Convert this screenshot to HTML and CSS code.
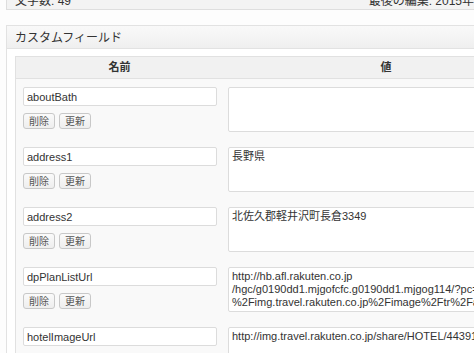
FILE: index.html
```html
<!DOCTYPE html>
<html lang="ja">
<head>
  <meta charset="UTF-8">
  <title>カスタムフィールド</title>
  <link rel="stylesheet" href="styles.css">
</head>
<body>
  <div class="status-bar">
    <span class="word-count">文字数: 49</span>
    <span class="last-edit">最後の編集: 2015年</span>
  </div>

  <div class="postbox">
    <h3 class="postbox-title">カスタムフィールド</h3>
    <div class="inside">
      <div class="meta-table">
        <div class="meta-head">名前</div>
        <div class="meta-head">値</div>

        <!-- rows -->
        <div class="meta-key">
          <input class="key-input" type="text" value="aboutBath">
          <div class="meta-buttons">
            <button class="small-button">削除</button>
            <button class="small-button">更新</button>
          </div>
        </div>
        <div class="meta-value"><textarea class="value-input" wrap="off"></textarea></div>

        <div class="meta-key">
          <input class="key-input" type="text" value="address1">
          <div class="meta-buttons">
            <button class="small-button">削除</button>
            <button class="small-button">更新</button>
          </div>
        </div>
        <div class="meta-value"><textarea class="value-input" wrap="off">長野県</textarea></div>

        <div class="meta-key">
          <input class="key-input" type="text" value="address2">
          <div class="meta-buttons">
            <button class="small-button">削除</button>
            <button class="small-button">更新</button>
          </div>
        </div>
        <div class="meta-value"><textarea class="value-input" wrap="off">北佐久郡軽井沢町長倉3349</textarea></div>

        <div class="meta-key">
          <input class="key-input" type="text" value="dpPlanListUrl">
          <div class="meta-buttons">
            <button class="small-button">削除</button>
            <button class="small-button">更新</button>
          </div>
        </div>
        <div class="meta-value"><textarea class="value-input" wrap="off">http://hb.afl.rakuten.co.jp
/hgc/g0190dd1.mjgofcfc.g0190dd1.mjgog114/?pc=http%3A%2F%2Fimg.travel.rakuten.co.jp
%2Fimg.travel.rakuten.co.jp%2Fimage%2Ftr%2Fapi%2Fkw%2F</textarea></div>

        <div class="meta-key">
          <input class="key-input" type="text" value="hotelImageUrl">
          <div class="meta-buttons">
            <button class="small-button">削除</button>
            <button class="small-button">更新</button>
          </div>
        </div>
        <div class="meta-value"><textarea class="value-input" wrap="off">http://img.travel.rakuten.co.jp/share/HOTEL/44391/44391.jpg</textarea></div>
      </div>
    </div>
  </div>
</body>
</html>
```

FILE: styles.css
```css
html, body {
  overflow: hidden;
}

body {
  margin: 0;
  background-color: #fdfdfd;
  font-family: "Liberation Sans", "Noto Sans CJK JP", sans-serif;
  color: #333;
}

/* word count bar, mostly scrolled off the top */
.status-bar {
  display: flex;
  justify-content: space-between;
  align-items: flex-end;
  height: 9px;
  margin-left: 6px;
  padding-left: 8px;
  overflow: hidden;
  background-color: #f3f3f3;
  border-left: 1px solid #dedede;
  border-bottom: 1px solid #dedede;
  font-size: 12px;
  line-height: 15px;
  white-space: nowrap;
}

.postbox {
  width: 560px;
  margin-top: 15px;
  margin-left: 6px;
  background-color: #fff;
  border: 1px solid #e2e2e2;
}

.postbox-title {
  margin: 0;
  height: 22px;
  padding-left: 8px;
  font-size: 12px;
  font-weight: normal;
  line-height: 22px;
  color: #333;
  font-family: "Noto Sans CJK JP", sans-serif;
  background: linear-gradient(#f9f9f9, #efefef);
  border-bottom: 1px solid #e2e2e2;
}

.inside {
  padding: 7px 0 0 8px;
}

.meta-table {
  display: grid;
  grid-template-columns: 207px 326px;
  background-color: #f9f9f9;
  border: 1px solid #e1e1e1;
}

.meta-head {
  height: 21px;
  line-height: 21px;
  text-align: center;
  font-size: 11px;
  font-weight: bold;
  color: #333;
  background-color: #f1f1f1;
  border-bottom: 1px solid #e1e1e1;
}

.meta-key {
  padding: 8px 6px 7px 7px;
}

.meta-value {
  padding: 8px 0 7px 5px;
}

.key-input {
  display: block;
  box-sizing: border-box;
  width: 194px;
  height: 19px;
  margin: 0;
  padding: 0 3px;
  font-family: "Liberation Sans", "Noto Sans CJK JP", sans-serif;
  font-size: 11px;
  color: #333;
  background-color: #fff;
  border: 1px solid #dcdcdc;
  border-radius: 2px;
}

.meta-buttons {
  display: flex;
  gap: 4px;
  margin-top: 7px;
}

.small-button {
  box-sizing: border-box;
  width: 32px;
  height: 16px;
  padding: 0;
  font-family: "Noto Sans CJK JP", sans-serif;
  font-size: 10px;
  line-height: 14px;
  color: #555;
  background: linear-gradient(#fafafa, #eeeeee);
  border: 1px solid #c8c8c8;
  border-radius: 3px;
}

.value-input {
  display: block;
  box-sizing: border-box;
  width: 314px;
  height: 45px;
  margin: 0;
  padding: 2px 3px;
  font-family: "Liberation Sans", "Noto Sans CJK JP", sans-serif;
  font-size: 11px;
  line-height: 13px;
  color: #333;
  background-color: #fff;
  border: 1px solid #dcdcdc;
  border-radius: 2px;
  resize: none;
  overflow: hidden;
}
```
